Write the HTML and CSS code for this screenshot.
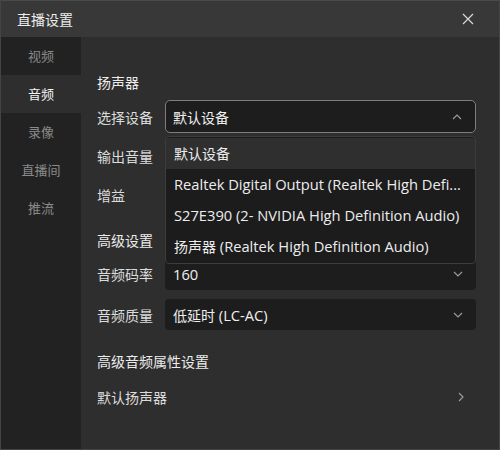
FILE: index.html
```html
<!DOCTYPE html>
<html lang="zh">
<head>
<meta charset="utf-8">
<link rel="stylesheet" href="styles.css">
</head>
<body>
<div class="window">
  <div class="titlebar">
    <span class="title">直播设置</span>
    <svg class="close" width="12" height="12" viewBox="0 0 12 12"><path d="M1 1L11 11M11 1L1 11" stroke="#d8d8d8" stroke-width="1.2" fill="none"/></svg>
  </div>
  <div class="body">
    <nav class="sidebar">
      <div class="nav-item">视频</div>
      <div class="nav-item active">音频</div>
      <div class="nav-item">录像</div>
      <div class="nav-item">直播间</div>
      <div class="nav-item">推流</div>
    </nav>
    <main class="content">
      <div class="heading h1">扬声器</div>
      <div class="row row-select">
        <span class="label">选择设备</span>
        <div class="select open">
          <span class="cjk">默认设备</span>
          <svg class="chev" width="10" height="6" viewBox="0 0 10 6"><path d="M1 5L5 1L9 5" stroke="#9a9a9a" stroke-width="1.2" fill="none"/></svg>
        </div>
      </div>
      <div class="row row-plain"><span class="label">输出音量</span></div>
      <div class="row row-plain"><span class="label">增益</span></div>
      <div class="heading h2">高级设置</div>
      <div class="row row-s1">
        <span class="label">音频码率</span>
        <div class="select">
          <span>160</span>
          <svg class="chev" width="10" height="6" viewBox="0 0 10 6"><path d="M1 1L5 5L9 1" stroke="#9a9a9a" stroke-width="1.2" fill="none"/></svg>
        </div>
      </div>
      <div class="row row-s2">
        <span class="label">音频质量</span>
        <div class="select">
          <span><span class="cjk">低延时</span> (LC-AC)</span>
          <svg class="chev" width="10" height="6" viewBox="0 0 10 6"><path d="M1 1L5 5L9 1" stroke="#9a9a9a" stroke-width="1.2" fill="none"/></svg>
        </div>
      </div>
      <div class="heading h3">高级音频属性设置</div>
      <div class="link-row">
        <span class="label">默认扬声器</span>
        <svg width="6" height="10" viewBox="0 0 6 10"><path d="M1 1L5 5L1 9" stroke="#9a9a9a" stroke-width="1.2" fill="none"/></svg>
      </div>
      <ul class="dropdown">
        <li class="hover"><span class="cjk">默认设备</span></li>
        <li>Realtek Digital Output (Realtek High Defi...</li>
        <li>S27E390 (2- NVIDIA High Definition Audio)</li>
        <li><span class="cjk">扬声器</span>&nbsp;(Realtek High Definition Audio)</li>
      </ul>
    </main>
  </div>
</div>
</body>
</html>
```
FILE: styles.css
```css
* { box-sizing: border-box; }
html, body { margin: 0; padding: 0; background: #2e2e2e; }
body {
  font-family: "Open Sans", "Noto Sans CJK SC", sans-serif;
  color: #e6e6e6;
}
.window {
  width: 500px;
  height: 450px;
  border: 1px solid #444;
  border-top-color: #4a4a4a;
  display: flex;
  flex-direction: column;
  overflow: hidden;
}
.titlebar {
  height: 36px;
  background: #383838;
  display: flex;
  align-items: center;
  justify-content: space-between;
  padding: 0 25px 0 16px;
  flex-shrink: 0;
}
.title { font-size: 14px; color: #ececec; font-family: "Noto Sans CJK SC", sans-serif; }
.close { display: block; }
.body { flex: 1; display: flex; }
.sidebar {
  width: 80px;
  background: #222;
  display: flex;
  flex-direction: column;
}
.nav-item {
  height: 38px;
  display: flex;
  align-items: center;
  justify-content: center;
  font-size: 13px;
  color: #8a8a8a;
  font-family: "Noto Sans CJK SC", sans-serif;
  padding-bottom: 1px;
}
.nav-item.active { background: #2e2e2e; color: #f2f2f2; }
.content {
  flex: 1;
  position: relative;
  padding: 35px 23px 0 16px;
  display: flex;
  flex-direction: column;
  font-size: 14px;
}
.heading, .label { font-family: "Noto Sans CJK SC", sans-serif; font-size: 14px; line-height: 20px; }
.heading { color: #ececec; height: 20px; }
.label { color: #dcdcdc; width: 68px; flex-shrink: 0; }
.row { display: flex; align-items: center; }
.row-select { margin-top: 8px; height: 33px; }
.row-plain { margin-top: 7px; height: 32px; }
.h2 { margin-top: 19px; }
.row-s1 { margin-top: 8px; height: 32px; }
.row-s2 { margin-top: 9px; height: 31px; }
.h3 { margin-top: 21px; }
.link-row {
  margin-top: 16px;
  height: 20px;
  display: flex;
  align-items: center;
  justify-content: space-between;
  padding-right: 12px;
}
.link-row .label { width: auto; }
.select {
  flex: 1;
  height: 100%;
  background: #1d1d1d;
  border-radius: 4px;
  display: flex;
  align-items: center;
  justify-content: space-between;
  padding: 0 13px 0 8px;
  color: #f0f0f0;
  font-size: 14.7px;
}
.select.open { border: 1px solid #7e7e7e; border-radius: 5px; padding-left: 7px; padding-right: 13px; }
.cjk { font-family: "Noto Sans CJK SC", sans-serif; font-size: 14px; }
.chev { display: block; }
.dropdown {
  position: absolute;
  left: 84px;
  top: 99px;
  width: 311px;
  margin: 0;
  padding: 1px 0;
  list-style: none;
  background: #1c1c1c;
  border: 1px solid #3c3c3c;
  border-radius: 4px;
}
.dropdown li {
  height: 31px;
  display: flex;
  align-items: center;
  padding-left: 8px;
  padding-bottom: 2px;
  font-size: 14.7px;
  color: #ececec;
  white-space: nowrap;
  overflow: hidden;
}
.dropdown li.hover { background: #2f2f2f; }
```
